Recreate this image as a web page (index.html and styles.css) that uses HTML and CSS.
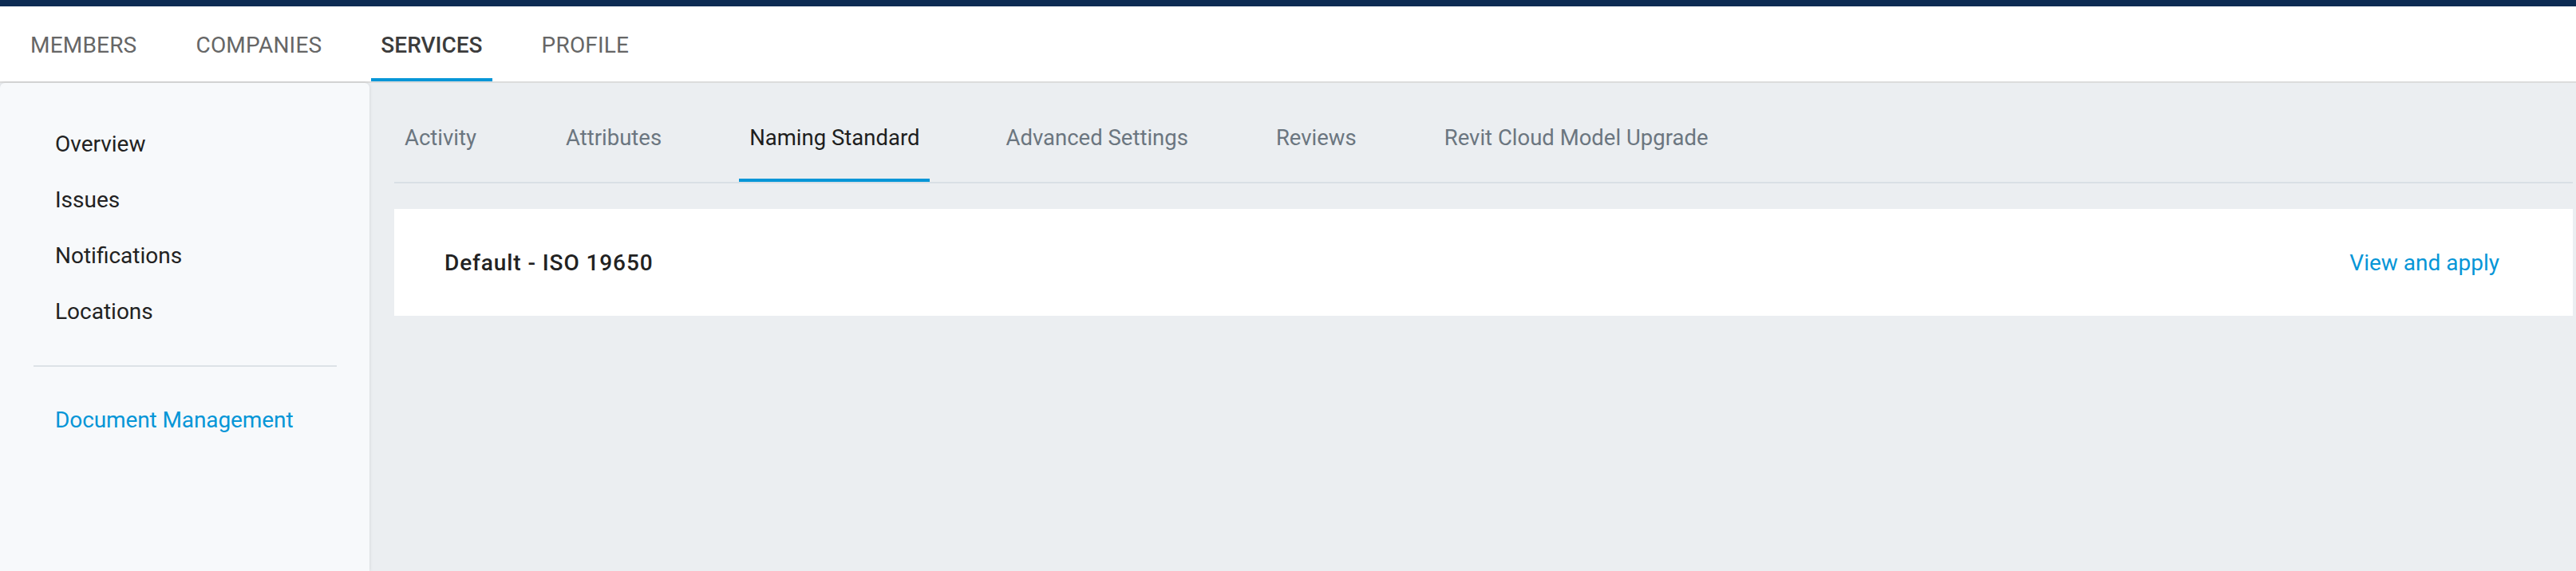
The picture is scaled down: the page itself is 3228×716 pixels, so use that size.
FILE: index.html
```html
<!DOCTYPE html>
<html lang="en">
<head>
  <meta charset="UTF-8" />
  <meta name="viewport" content="width=device-width, initial-scale=1.0"/>
  <title>Project Admin - Services</title>
  <link rel="stylesheet" href="styles.css">
</head>
<body>

  <!-- Top strip -->
  <div class="topbar"></div>

  <!-- Main navigation -->
  <nav class="main-nav">
    <a class="nav-item" href="#">MEMBERS</a>
    <a class="nav-item" href="#">COMPANIES</a>
    <a class="nav-item active" href="#">SERVICES</a>
    <a class="nav-item" href="#">PROFILE</a>
  </nav>

  <div class="layout">
    <!-- Left menu -->
    <aside class="sidebar">
      <ul class="side-list">
        <li class="side-item">Overview</li>
        <li class="side-item">Issues</li>
        <li class="side-item">Notifications</li>
        <li class="side-item">Locations</li>
      </ul>
      <div class="side-divider"></div>
      <a class="side-item side-link" href="#">Document Management</a>
    </aside>

    <!-- Service settings -->
    <main class="content">
      <div class="tabs">
        <a class="tab" href="#">Activity</a>
        <a class="tab" href="#">Attributes</a>
        <a class="tab active" href="#">Naming Standard</a>
        <a class="tab" href="#">Advanced Settings</a>
        <a class="tab" href="#">Reviews</a>
        <a class="tab" href="#">Revit Cloud Model Upgrade</a>
      </div>

      <div class="standard-card">
        <span class="standard-name">Default - ISO 19650</span>
        <a class="card-action" href="#">View and apply</a>
      </div>
    </main>
  </div>

</body>
</html>
```

FILE: styles.css
```css
* {
  box-sizing: border-box;
  margin: 0;
  padding: 0;
}

body {
  font-family: Roboto, "Noto Sans", sans-serif;
  font-size: 28px;
  background: #ebeef1;
  display: flex;
  flex-direction: column;
  height: 100vh;
  overflow: hidden;
}

a {
  text-decoration: none;
  color: inherit;
}

.topbar {
  height: 8px;
  background: #0d2b53;
  flex-shrink: 0;
}

/* Top navigation */
.main-nav {
  display: flex;
  gap: 50px;
  height: 96px;
  padding-left: 26px;
  background: #fff;
  border-bottom: 2px solid #dcdcdc;
  flex-shrink: 0;
}

.nav-item {
  display: flex;
  align-items: center;
  padding: 6px 12px 0;
  border-bottom: 4px solid transparent;
  color: #666;
  letter-spacing: 0.2px;
}

.nav-item.active {
  color: #3c3c3c;
  font-weight: 500;
  letter-spacing: 0;
  border-bottom-color: #0696d7;
}

.layout {
  display: flex;
  flex: 1;
}

/* Sidebar */
.sidebar {
  width: 463px;
  flex-shrink: 0;
  background: #f7f9fb;
  border-radius: 6px 6px 0 0;
  box-shadow: 0 0 4px rgba(0,0,0,0.12);
  padding-top: 42px;
}

.side-list {
  list-style: none;
}

.side-item {
  display: block;
  height: 70px;
  line-height: 70px;
  padding-left: 69px;
  color: #222;
}

.side-divider {
  height: 2px;
  background: #dde2e7;
  margin: 32px 41px 32px 42px;
}

.side-link {
  color: #0696d7;
  letter-spacing: -0.1px;
}

/* Content */
.content {
  flex: 1;
  padding: 0 4px 0 31px;
}

.tabs {
  display: flex;
  border-bottom: 2px solid #d9dfe5;
}

.tab {
  padding: 49px 13px 31px;
  margin-right: 84px;
  line-height: 40px;
  font-size: 27.5px;
  color: #6b7680;
  border-bottom: 4px solid transparent;
}

.tab:first-child {
  margin-right: 86px;
}

.tab.active {
  color: #1e1e1e;
  margin-right: 82px;
  border-bottom-color: #0696d7;
}

.standard-card {
  margin-top: 32px;
  height: 134px;
  background: #fff;
  display: flex;
  align-items: center;
  justify-content: space-between;
  padding: 0 92px 0 63px;
}

.standard-name {
  font-weight: 500;
  color: #222;
  letter-spacing: 0.9px;
}

.card-action {
  color: #0696d7;
}
```
